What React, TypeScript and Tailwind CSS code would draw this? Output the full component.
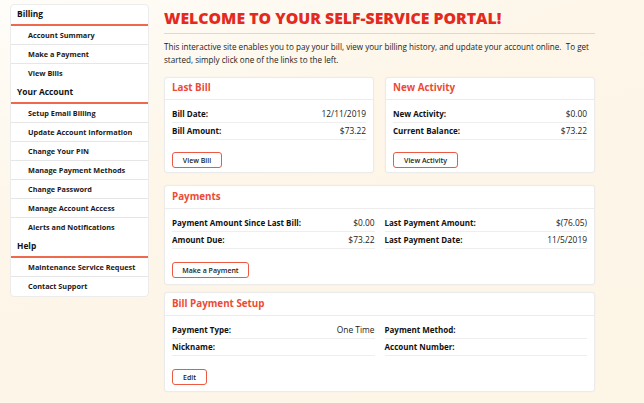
const font = { fontFamily: '"Open Sans", "Liberation Sans", sans-serif' };

const sections = [
  { title: "Billing", items: ["Account Summary", "Make a Payment", "View Bills"] },
  {
    title: "Your Account",
    items: [
      "Setup Email Billing",
      "Update Account Information",
      "Change Your PIN",
      "Manage Payment Methods",
      "Change Password",
      "Manage Account Access",
      "Alerts and Notifications",
    ],
  },
  { title: "Help", items: ["Maintenance Service Request", "Contact Support"] },
];

function Row({ label, value }: { label: string; value?: string }) {
  return (
    <div className="flex h-[17px] items-center justify-between border-b border-[#eeeeee] text-[8px] text-[#111]">
      <span className="font-bold">{label}</span>
      <span className="text-[8.4px] text-[#222]">{value}</span>
    </div>
  );
}

function Btn({ children, w }: { children: string; w: string }) {
  return (
    <button
      className={`${w} h-[16px] rounded-[3px] border-[1.5px] border-[#ec5a44] bg-white text-[7px] leading-none font-semibold text-[#222]`}
    >
      {children}
    </button>
  );
}

function Card({
  title,
  head = "h-[22px]",
  pb = "pb-[4px]",
  children,
}: {
  title: string;
  head?: string;
  pb?: string;
  children: React.ReactNode;
}) {
  return (
    <div className="rounded-[3px] border border-[#ebebeb] bg-white shadow-[0_0_2px_rgba(0,0,0,0.04)]">
      <div className={`flex ${head} items-center border-b border-[#ececec] px-[7px] text-[9.8px] font-bold text-[#ec4b35]`}>
        {title}
      </div>
      <div className={`px-[7px] pt-[6px] ${pb}`}>{children}</div>
    </div>
  );
}

export default function App() {
  return (
    <div
      className="flex h-[403px] w-[644px] items-start gap-[15px] overflow-hidden bg-[linear-gradient(160deg,#fffdf9_0%,#fdf6e9_35%,#fdf5e6_100%)] pl-[10px] pt-[4px]"
      style={font}
    >
      {/* sidebar */}
      <div className="w-[139px] shrink-0 overflow-hidden rounded-[4px] border border-[#ececec] bg-white">
        {sections.map((s) => (
          <div key={s.title}>
            <div className="flex h-[21px] items-center border-b-2 border-[#ef6a4c] px-[6px] text-[8.4px] font-bold text-[#111]">
              {s.title}
            </div>
            {s.items.map((it, i) => (
              <div
                key={it}
                className={`flex h-[19px] items-center pl-[17px] text-[7.3px] font-bold text-[#1a1a1a] ${
                  i < s.items.length - 1 ? "border-b border-[#e6e6e6]" : ""
                }`}
              >
                {it}
              </div>
            ))}
          </div>
        ))}
      </div>

      {/* main */}
      <div className="flex w-[431px] flex-col">
        <h1 className="mt-[5px] text-[15.8px] leading-[18px] font-extrabold text-[#e42a1f]">
          WELCOME TO YOUR SELF-SERVICE PORTAL!
        </h1>
        <div className="mt-[6px] border-b border-[#d9d9d9]" />
        <p className="mt-[6px] text-[8.1px] leading-[13px] text-[#222]">
          This interactive site enables you to pay your bill, view your billing history, and update your account online.&nbsp; To get started, simply click one of the links to the left.
        </p>

        <div className="mt-[11px] grid grid-cols-2 gap-[11px]">
          <Card title="Last Bill">
            <Row label="Bill Date:" value="12/11/2019" />
            <Row label="Bill Amount:" value="$73.22" />
            <div className="mt-[12px] flex">
              <Btn w="w-[50px]">View Bill</Btn>
            </div>
          </Card>
          <Card title="New Activity">
            <Row label="New Activity:" value="$0.00" />
            <Row label="Current Balance:" value="$73.22" />
            <div className="mt-[12px] flex">
              <Btn w="w-[65px]">View Activity</Btn>
            </div>
          </Card>
        </div>

        <div className="mt-[12px]">
          <Card title="Payments" head="h-[23px]" pb="pb-[6px]">
            <div className="grid grid-cols-2 gap-[10px]">
              <div>
                <Row label="Payment Amount Since Last Bill:" value="$0.00" />
                <Row label="Amount Due:" value="$73.22" />
              </div>
              <div>
                <Row label="Last Payment Amount:" value="$(76.05)" />
                <Row label="Last Payment Date:" value="11/5/2019" />
              </div>
            </div>
            <div className="mt-[13px] flex">
              <Btn w="w-[77px]">Make a Payment</Btn>
            </div>
          </Card>
        </div>

        <div className="mt-[7px]">
          <Card title="Bill Payment Setup" head="h-[23px]" pb="pb-[6px]">
            <div className="grid grid-cols-2 gap-[10px]">
              <div>
                <Row label="Payment Type:" value="One Time" />
                <Row label="Nickname:" />
              </div>
              <div>
                <Row label="Payment Method:" />
                <Row label="Account Number:" />
              </div>
            </div>
            <div className="mt-[13px] flex">
              <Btn w="w-[35px]">Edit</Btn>
            </div>
          </Card>
        </div>
      </div>
    </div>
  );
}
